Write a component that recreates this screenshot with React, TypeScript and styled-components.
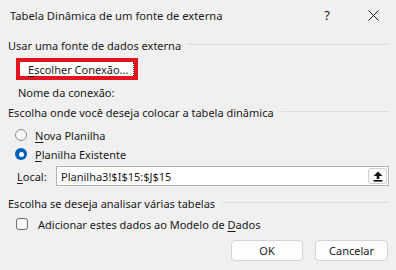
import React from "react";
import styled, { createGlobalStyle } from "styled-components";

const Global = createGlobalStyle`
  html, body { margin: 0; padding: 0; background: #f0f0f0; }
  body { font-family: "Noto Sans", "Open Sans", "Liberation Sans", sans-serif; font-size: 11px; color: #1a1a1a; }
`;

const Dialog = styled.div`
  width: 396px;
  height: 270px;
  background: #f0f0f0;
  overflow: hidden;
  display: flex;
  flex-direction: column;
  box-sizing: border-box;
`;

const TitleBar = styled.div`
  height: 30px;
  display: flex;
  align-items: center;
  padding-left: 10px;
  flex-shrink: 0;
`;

const Title = styled.div`
  flex: 1;
  font-size: 11.2px;
  white-space: nowrap;
`;

const TitleButton = styled.div`
  width: 46px;
  height: 30px;
  display: flex;
  align-items: center;
  justify-content: center;
  font-size: 13px;
`;

const Content = styled.div`
  padding: 0 8px;
  display: flex;
  flex-direction: column;
`;

const SectionHeader = styled.div<{ $mt: number }>`
  height: 18px;
  margin-top: ${(p) => p.$mt}px;
  display: flex;
  align-items: center;
  white-space: nowrap;
  &::after {
    content: "";
    flex: 1;
    height: 1px;
    background: #dcdcdc;
    margin-left: 7px;
    margin-top: -1px;
  }
`;

const FocusOutline = styled.div`
  margin-top: 4px;
  margin-left: 8px;
  width: 122px;
  height: 22px;
  box-sizing: border-box;
  border: 4px solid #e3141e;
  display: flex;
`;

const ConnButton = styled.div`
  flex: 1;
  background: #fdfdfd;
  display: flex;
  align-items: center;
  padding-left: 8px;
  position: relative;
  white-space: nowrap;
  &::after {
    content: "";
    position: absolute;
    right: 0;
    top: 0;
    bottom: 0;
    border-right: 1px dotted #333;
  }
`;

const U = styled.span`
  text-decoration: underline;
  text-underline-offset: 2px;
`;

const PlainRow = styled.div<{ $mt: number; $pl: number; $h?: number }>`
  height: ${(p) => p.$h ?? 16}px;
  margin-top: ${(p) => p.$mt}px;
  padding-left: ${(p) => p.$pl}px;
  display: flex;
  align-items: center;
  white-space: nowrap;
`;

const OptionRow = styled.div<{ $mt: number }>`
  height: 18px;
  margin-top: ${(p) => p.$mt}px;
  padding-left: 7px;
  display: flex;
  align-items: center;
  gap: 8px;
  white-space: nowrap;
`;

const Radio = styled.span<{ $checked?: boolean }>`
  width: 12px;
  height: 12px;
  border-radius: 50%;
  box-sizing: border-box;
  flex-shrink: 0;
  ${(p) =>
    p.$checked
      ? `background: #005fb8; border: none; display:flex; align-items:center; justify-content:center;
         &::after { content: ""; width: 5px; height: 5px; border-radius: 50%; background: #fff; }`
      : `background: #f7f7f7; border: 1px solid #8a8a8a;`}
`;

const Checkbox = styled.span`
  width: 12px;
  height: 12px;
  border-radius: 3px;
  box-sizing: border-box;
  border: 1px solid #6e6e6e;
  background: #f7f7f7;
  flex-shrink: 0;
  margin-left: 1px;
  margin-right: 2px;
`;

const LocalRow = styled.div`
  height: 20px;
  margin-top: 3px;
  display: flex;
  align-items: center;
  padding-left: 9px;
  margin-right: -1px;
`;

const LocalLabel = styled.div`
  width: 39px;
  white-space: nowrap;
`;

const Input = styled.div`
  flex: 1;
  height: 20px;
  box-sizing: border-box;
  border: 1px solid #b4b4b4;
  background: #fff;
  display: flex;
  align-items: center;
  padding-left: 4px;
  padding-right: 1px;
`;

const InputText = styled.div`
  flex: 1;
  white-space: nowrap;
`;

const PickButton = styled.div`
  width: 19px;
  height: 16px;
  box-sizing: border-box;
  border: 1px solid #cfcfcf;
  border-radius: 3px;
  background: #fbfbfb;
  display: flex;
  align-items: center;
  justify-content: center;
`;

const Footer = styled.div`
  margin-top: 7px;
  display: flex;
  justify-content: flex-end;
  gap: 12px;
`;

const DialogButton = styled.div<{ $w: number }>`
  width: ${(p) => p.$w}px;
  height: 21px;
  box-sizing: border-box;
  border: 1px solid #d3d3d3;
  border-radius: 4px;
  background: #fdfdfd;
  display: flex;
  align-items: center;
  justify-content: center;
`;

export default function App() {
  return (
    <>
      <Global />
      <Dialog>
        <TitleBar>
          <Title>Tabela Dinâmica de um fonte de externa</Title>
          <TitleButton>?</TitleButton>
          <TitleButton>
            <svg width="11" height="11" viewBox="0 0 11 11">
              <path d="M0.5 0.5 L10.5 10.5 M10.5 0.5 L0.5 10.5" stroke="#1a1a1a" strokeWidth="1" />
            </svg>
          </TitleButton>
        </TitleBar>
        <Content>
          <SectionHeader $mt={6}>Usar uma fonte de dados externa</SectionHeader>
          <FocusOutline>
            <ConnButton>
              <span>
                <U>E</U>scolher Conexão...
              </span>
            </ConnButton>
          </FocusOutline>
          <PlainRow $mt={4} $pl={10}>Nome da conexão:</PlainRow>
          <SectionHeader $mt={3}>Escolha onde você deseja colocar a tabela dinâmica</SectionHeader>
          <OptionRow $mt={5}>
            <Radio />
            <span>
              <U>N</U>ova Planilha
            </span>
          </OptionRow>
          <OptionRow $mt={1}>
            <Radio $checked />
            <span>
              <U>P</U>lanilha Existente
            </span>
          </OptionRow>
          <LocalRow>
            <LocalLabel>
              <U>L</U>ocal:
            </LocalLabel>
            <Input>
              <InputText>Planilha3!$I$15:$J$15</InputText>
              <PickButton>
                <svg width="10" height="11" viewBox="0 0 10 11">
                  <path d="M5 0.5 L9.5 5 L6.3 5 L6.3 8 L3.7 8 L3.7 5 L0.5 5 Z" fill="#111" />
                  <rect x="0.5" y="9" width="9" height="1.6" fill="#111" />
                </svg>
              </PickButton>
            </Input>
          </LocalRow>
          <SectionHeader $mt={8}>Escolha se deseja analisar várias tabelas</SectionHeader>
          <OptionRow $mt={3}>
            <Checkbox />
            <span>
              Adicionar estes dados ao Modelo de <U>D</U>ados
            </span>
          </OptionRow>
          <Footer>
            <DialogButton $w={72}>OK</DialogButton>
            <DialogButton $w={73}>Cancelar</DialogButton>
          </Footer>
        </Content>
      </Dialog>
    </>
  );
}
